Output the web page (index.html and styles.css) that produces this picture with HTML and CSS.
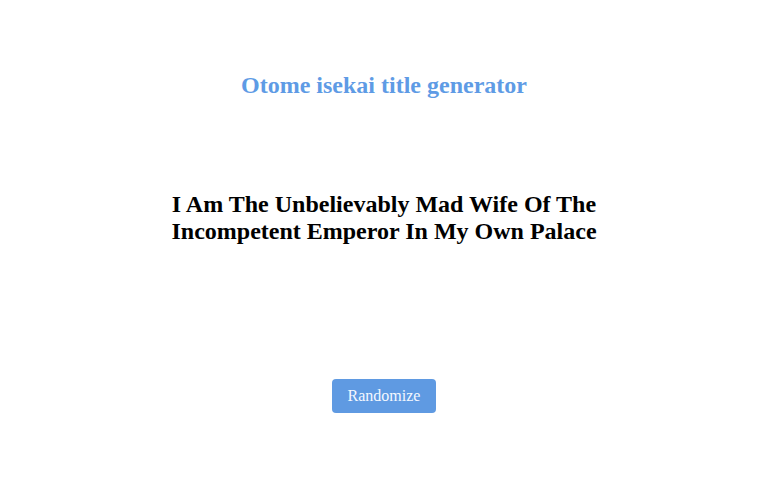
FILE: index.html
```html
<!DOCTYPE html>
<html lang="en">
<head>
<meta charset="utf-8">
<title>Otome isekai title generator</title>
<link rel="stylesheet" href="styles.css">
</head>
<body>
<main class="page">
  <h1 class="site-title">Otome isekai title generator</h1>
  <h2 class="generated">I Am The Unbelievably Mad Wife Of The<br>Incompetent Emperor In My Own Palace</h2>
  <button class="randomize" type="button">Randomize</button>
</main>
</body>
</html>
```
FILE: styles.css
```css
html, body {
  margin: 0;
  padding: 0;
  background: #ffffff;
}

.page {
  display: flex;
  flex-direction: column;
  align-items: center;
  font-family: "Liberation Serif", "Times New Roman", serif;
  text-align: center;
}

.site-title {
  margin: 71px 0 0;
  font-size: 24px;
  line-height: 28px;
  font-weight: bold;
  color: #5e9be5;
}

.generated {
  margin: 92px 0 0;
  font-size: 24px;
  line-height: 27px;
  font-weight: bold;
  color: #000000;
}

.randomize {
  margin-top: 134px;
  padding: 7px 16px;
  border: none;
  border-radius: 4px;
  background: #5f9ae2;
  color: #f4f8ff;
  font-family: "Liberation Serif", "Times New Roman", serif;
  font-size: 16px;
  line-height: 20px;
}
```
